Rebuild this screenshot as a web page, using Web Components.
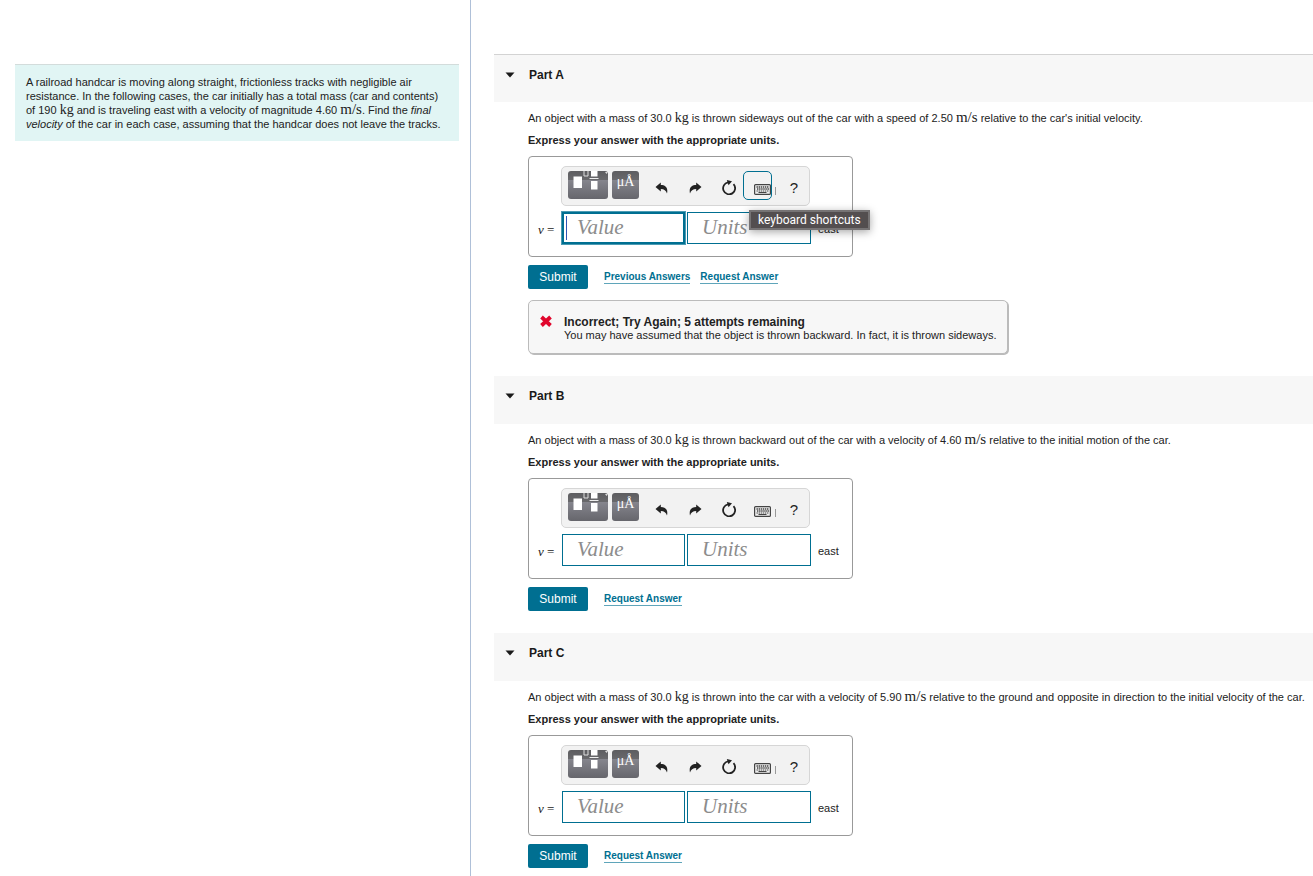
<!DOCTYPE html>
<html lang="en">
<head>
<meta charset="utf-8">
<title>Railroad handcar</title>
<style>
* {
    box-sizing: border-box;
}
body {
    margin: 0;
    background: #fff;
    color: #222;
    font-family: "Liberation Sans", Arial, sans-serif;
    font-size: 11px;
    --accent: #006f91;
}
.math {
    font-family: "Liberation Serif", "Times New Roman", serif;
    font-size: 14px;
    line-height: 10px;
}
.ratio {
    font-size: 15px;
}
</style>
</head>
<body>
<problem-page>
    <problem-intro slot="intro">A railroad handcar is moving along straight, frictionless tracks with negligible air resistance. In the following cases, the car initially has a total mass (car and contents) of 190 <span class="math">kg</span> and is traveling east with a velocity of magnitude 4.60 <span class="math ratio">m/s</span>. Find the <i>final velocity</i> of the car in each case, assuming that the handcar does not leave the tracks.</problem-intro>

    <problem-part label="Part A" first>
        <span slot="prompt">An object with a mass of 30.0 <span class="math">kg</span> is thrown sideways out of the car with a speed of 2.50 <span class="math ratio">m/s</span> relative to the car's initial velocity.</span>
        <answer-box active></answer-box>
        <answer-actions slot="actions" previous></answer-actions>
        <answer-feedback slot="feedback">
            <span slot="title">Incorrect; Try Again; 5 attempts remaining</span>
            You may have assumed that the object is thrown backward. In fact, it is thrown sideways.
        </answer-feedback>
    </problem-part>

    <problem-part label="Part B">
        <span slot="prompt">An object with a mass of 30.0 <span class="math">kg</span> is thrown backward out of the car with a velocity of 4.60 <span class="math ratio">m/s</span> relative to the initial motion of the car.</span>
        <answer-box></answer-box>
        <answer-actions slot="actions"></answer-actions>
    </problem-part>

    <problem-part label="Part C">
        <span slot="prompt">An object with a mass of 30.0 <span class="math">kg</span> is thrown into the car with a velocity of 5.90 <span class="math ratio">m/s</span> relative to the ground and opposite in direction to the initial velocity of the car.</span>
        <answer-box></answer-box>
        <answer-actions slot="actions"></answer-actions>
    </problem-part>
</problem-page>

<script>
class ProblemPage extends HTMLElement {
    constructor() {
        super();
        this.attachShadow({mode: "open"}).innerHTML = `
        <style>
        * {
            box-sizing: border-box;
        }
        :host {
            display: flex;
            min-height: 100vh;
        }
        aside {
            flex: 0 0 471px;
            padding: 64px 11px 0 15px;
            border-right: 1px solid #afc0d8;
        }
        main {
            flex: 1;
            min-width: 0;
            display: flex;
            flex-direction: column;
            gap: 22px;
            padding: 54px 0 0 23px;
        }
        </style>
        <aside><slot name="intro"></slot></aside>
        <main><slot></slot></main>`;
    }
}

class ProblemIntro extends HTMLElement {
    constructor() {
        super();
        this.attachShadow({mode: "open"}).innerHTML = `
        <style>
        :host {
            display: block;
            padding: 10px 14px 10px 11px;
            border-top: 1px solid #d3dcdb;
            background: #e1f5f4;
            line-height: 14px;
        }
        </style>
        <slot></slot>`;
    }
}

class ProblemPart extends HTMLElement {
    connectedCallback() {
        this.attachShadow({mode: "open"}).innerHTML = `
        <style>
        * {
            box-sizing: border-box;
        }
        :host {
            display: block;
        }
        h2 {
            height: 48px;
            margin: 0;
            padding: 12px 11px 0;
            background: #f7f7f7;
        }
        :host([first]) h2 {
            border-top: 1px solid #d3d3d3;
        }
        h2 button {
            display: flex;
            align-items: center;
            gap: 14px;
            padding: 0;
            border: 0;
            background: none;
            color: #1a1a1a;
            font: bold 12px/16px "Liberation Sans", Arial, sans-serif;
        }
        .body {
            padding: 8px 0 0 34px;
        }
        p {
            margin: 0 0 6px;
            line-height: 16px;
        }
        .hint {
            margin-bottom: 8px;
            font-weight: bold;
        }
        </style>
        <h2>
            <button type="button" aria-expanded="true">
                <svg width="10" height="6" viewBox="0 0 10 6"><path d="M.5.5h9L5 5.5z" fill="#1a1a1a"/></svg>
                ${this.getAttribute("label")}
            </button>
        </h2>
        <div class="body">
            <p><slot name="prompt"></slot></p>
            <p class="hint">Express your answer with the appropriate units.</p>
            <slot></slot>
            <slot name="actions"></slot>
            <slot name="feedback"></slot>
        </div>`;
    }
}

class MathToolbar extends HTMLElement {
    connectedCallback() {
        const tip = this.hasAttribute("active")
            ? `<span class="tip" role="tooltip">keyboard shortcuts</span>`
            : "";
        this.attachShadow({mode: "open"}).innerHTML = `
        <style>
        * {
            box-sizing: border-box;
        }
        :host {
            display: flex;
            align-items: flex-start;
            box-sizing: border-box;
            width: 249px;
            height: 40px;
            padding: 4px 0 0 6px;
            border: 1px solid #d6d6d6;
            border-radius: 5px;
            background: #f2f2f2;
        }
        button {
            display: flex;
            justify-content: center;
            align-items: center;
            width: 28px;
            height: 29px;
            margin: 0 6px 0 0;
            padding: 4px 0 0;
            border: 0;
            background: none;
            color: #222;
        }
        .dark {
            height: 28px;
            margin-right: 4px;
            padding: 0;
            border-radius: 3px;
            background: linear-gradient(#5d5d60 0, #69696c 9px, #85858d 9px, #66666c 100%);
            overflow: hidden;
        }
        .templates {
            width: 40px;
        }
        .units {
            width: 27px;
            margin-right: 8px;
            padding-bottom: 6px;
            color: #fff;
            font: 14px/18px "Liberation Serif", serif;
        }
        .reset {
            margin-right: 0;
        }
        .keys {
            position: relative;
            width: 29px;
            margin-right: 3px;
            padding: 8px 0 0 9px;
            border: 1px solid transparent;
            border-radius: 5px;
        }
        :host([active]) .keys {
            border-color: var(--accent);
        }
        .bar {
            width: 1px;
            height: 8px;
            margin: 16px 4px 0 0;
            background: #999;
        }
        .help {
            margin: 0;
            font: 15px/20px "Liberation Sans", Arial, sans-serif;
        }
        .tip {
            position: absolute;
            top: 38px;
            left: 5px;
            z-index: 1;
            padding: 0 7px;
            border: 2px solid #767374;
            background: #534e4f;
            box-shadow: 0 2px 8px rgba(0, 0, 0, .35);
            color: #fff;
            font: 12px/16px Roboto, sans-serif;
            white-space: nowrap;
        }
        </style>
        <button type="button" class="dark templates" aria-label="Templates">
            <svg width="40" height="28" viewBox="0 0 40 28">
                <path d="M5.500 5.500h8.500v11.500H5.500zM23 0h6.500v5.500H23zM23 10h6.500v8.500H23z" fill="#fff"/>
                <path d="M21.500 7.500h9" stroke="#eee"/>
                <path d="M16 0v5h4V0" fill="none" stroke="#ddd"/>
                <path d="M37 1h3l-1.500 2z" fill="#ddd"/>
            </svg>
        </button>
        <button type="button" class="dark units">μÅ</button>
        <button type="button" aria-label="Undo">
            <svg width="13" height="12" viewBox="0 0 13 12"><path d="M.5 5 5.800.4V3c4.600 0 7.500 2.800 6.200 8.600C11 8.600 9.200 7.100 5.800 7.100v2.500z" fill="#222"/></svg>
        </button>
        <button type="button" aria-label="Redo">
            <svg width="13" height="12" viewBox="0 0 13 12"><path d="M12.500 5 7.200.4V3C2.600 3-.3 5.800 1 11.600c1-3 2.800-4.500 6.200-4.500v2.500z" fill="#222"/></svg>
        </button>
        <button type="button" class="reset" aria-label="Reset">
            <svg width="14" height="15" viewBox="0 0 14 15">
                <path d="M11.500 4.200A6 6 0 1 1 6 2.400" fill="none" stroke="#222" stroke-width="1.800"/>
                <path d="M4.800 0 10 1.300 6.500 5.300z" fill="#222"/>
            </svg>
        </button>
        <button type="button" class="keys" aria-label="keyboard shortcuts">
            <svg width="17" height="11" viewBox="0 0 17 11">
                <rect x=".6" y=".6" width="15.800" height="9.800" rx="1" fill="#eee" stroke="#444" stroke-width="1.200"/>
                <path d="M2.500 3h12M3 5h12" stroke="#444" stroke-width="1.300" stroke-dasharray="1.400 .7"/>
                <path d="M2.500 7h12" stroke="#444" stroke-width="1.200" stroke-dasharray="1.400 .7"/>
                <path d="M4.500 8.500h8" stroke="#444"/>
            </svg>
            ${tip}
        </button>
        <span class="bar"></span>
        <button type="button" class="help" aria-label="Help">?</button>`;
    }
}

class AnswerBox extends HTMLElement {
    connectedCallback() {
        const active = this.hasAttribute("active") ? "active" : "";
        this.attachShadow({mode: "open"}).innerHTML = `
        <style>
        * {
            box-sizing: border-box;
        }
        :host {
            display: block;
            box-sizing: border-box;
            width: 325px;
            padding: 9px 0 12px 9px;
            border: 1px solid #999;
            border-radius: 4px;
        }
        math-toolbar {
            margin: 0 0 6px 23px;
        }
        .row {
            display: grid;
            grid-template-columns: 22px 123px 124px auto;
            align-items: center;
            column-gap: 2px;
        }
        label {
            padding-top: 3px;
            font: 13px/16px "Liberation Serif", serif;
        }
        input {
            width: 100%;
            height: 32px;
            padding: 0 14px 2px;
            border: 1px solid var(--accent);
            border-radius: 0;
            outline: 0;
            background: #fff;
            color: #222;
            font: italic 21px/28px "Liberation Serif", serif;
        }
        input::placeholder {
            color: #8c8c8c;
            opacity: 1;
        }
        :host([active]) .value {
            /* insertion caret */
            background: linear-gradient(#2f55b5, #2f55b5) 3px center / 1px 24px no-repeat #fff;
            box-shadow: inset 0 0 0 1px var(--accent), 0 0 0 1px #4c9bb3;
        }
        .after {
            padding: 2px 0 0 5px;
        }
        </style>
        <math-toolbar ${active}></math-toolbar>
        <div class="row">
            <label for="value"><i>v</i> =</label>
            <input id="value" class="value" type="text" placeholder="Value">
            <input type="text" placeholder="Units" aria-label="Units">
            <span class="after">east</span>
        </div>`;
    }
}

class AnswerActions extends HTMLElement {
    connectedCallback() {
        const previous = this.hasAttribute("previous") ? `<a href="#">Previous Answers</a>` : "";
        this.attachShadow({mode: "open"}).innerHTML = `
        <style>
        :host {
            display: flex;
            align-items: center;
            gap: 10px;
            margin-top: 8px;
        }
        button {
            width: 60px;
            height: 24px;
            margin-right: 6px;
            padding: 0;
            border: 0;
            border-radius: 2px;
            background: var(--accent);
            color: #fff;
            font: 12px/24px "Liberation Sans", Arial, sans-serif;
        }
        a {
            border-bottom: 1px solid #5fa5ba;
            color: var(--accent);
            font-size: 10px;
            font-weight: bold;
            line-height: 12px;
            text-decoration: none;
        }
        </style>
        <button type="submit">Submit</button>
        ${previous}
        <a href="#">Request Answer</a>`;
    }
}

class AnswerFeedback extends HTMLElement {
    constructor() {
        super();
        this.attachShadow({mode: "open"}).innerHTML = `
        <style>
        :host {
            display: flex;
            align-items: flex-start;
            gap: 11px;
            box-sizing: border-box;
            width: fit-content;
            height: 54px;
            margin-top: 11px;
            padding: 14px 11px 0 10px;
            border: 1px solid #bbb;
            border-radius: 5px;
            background: #f7f7f7;
            box-shadow: 1px 1px 0 #bbb;
            line-height: 13px;
        }
        strong {
            display: block;
            font-size: 12px;
            line-height: 14px;
        }
        </style>
        <svg width="14" height="13" viewBox="0 0 14 13"><path d="M2.500 2 11.500 10.500M11.500 2 2.500 10.500" stroke="#e0062c" stroke-width="3.800"/></svg>
        <div>
            <strong><slot name="title"></slot></strong>
            <slot></slot>
        </div>`;
    }
}

customElements.define("problem-page", ProblemPage);
customElements.define("problem-intro", ProblemIntro);
customElements.define("problem-part", ProblemPart);
customElements.define("math-toolbar", MathToolbar);
customElements.define("answer-box", AnswerBox);
customElements.define("answer-actions", AnswerActions);
customElements.define("answer-feedback", AnswerFeedback);
</script>
</body>
</html>
